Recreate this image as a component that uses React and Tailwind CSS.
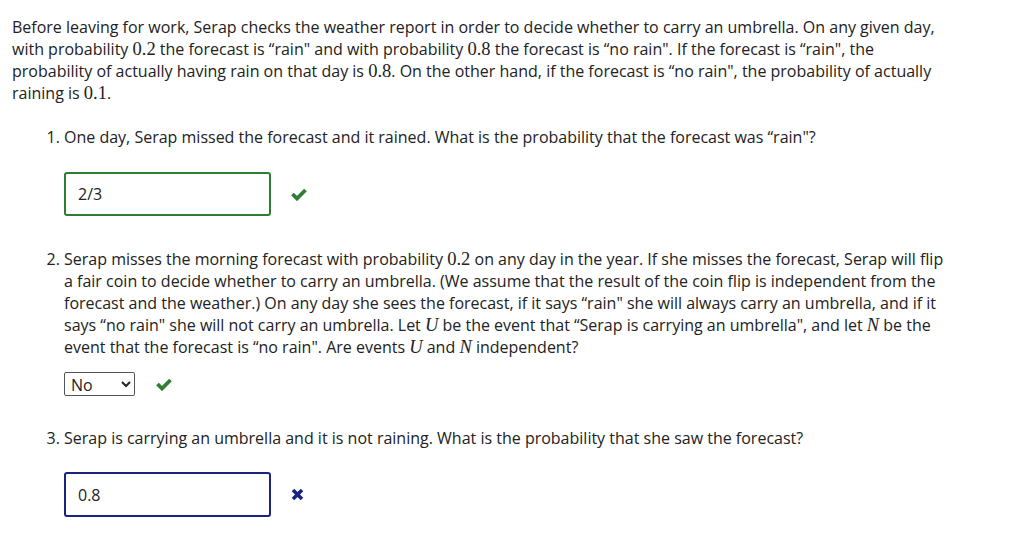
import { useState } from "react";

const M = ({ children, italic }) => (
  <span
    className={`font-['Liberation_Serif','DejaVu_Serif',serif] text-[18.5px] leading-none ${
      italic ? "italic" : ""
    }`}
  >
    {children}
  </span>
);

function Check() {
  return (
    <svg width="16" height="13" viewBox="0 0 16 13">
      <path d="M1.5 6 L6 10.5 L14.5 2" fill="none" stroke="#2e7d32" strokeWidth="3.8" />
    </svg>
  );
}

function Cross() {
  return (
    <svg width="13" height="13" viewBox="0 0 13 13">
      <path d="M2 2 L11 11 M11 2 L2 11" fill="none" stroke="#1a237e" strokeWidth="3.6" />
    </svg>
  );
}

export default function App() {
  const [sel, setSel] = useState("No");

  return (
    <div className="min-h-screen bg-white px-3 pt-[16px] text-[16px] leading-[22px] text-[#222] font-['Open_Sans',sans-serif]">
      <p className="pr-[60px]">
        Before leaving for work, Serap checks the weather report in order to decide whether to carry an
        umbrella. On any given day, with probability <M>0.2</M> the forecast is “rain" and with
        probability <M>0.8</M> the forecast is “no rain". If the forecast is “rain", the probability of
        actually having rain on that day is <M>0.8</M>. On the other hand, if the forecast is “no rain",
        the probability of actually raining is <M>0.1</M>.
      </p>

      <ol className="mt-[22px] pl-[52px] list-decimal">
        <li className="pr-[48px]">
          One day, Serap missed the forecast and it rained. What is the probability that the forecast was
          “rain"?
          <div className="flex items-center gap-5 mt-[24px]">
            <div className="w-[207px] h-[44px] border-2 border-[#2e7d32] rounded-[3px] flex items-center px-3">
              2/3
            </div>
            <Check />
          </div>
        </li>

        <li className="mt-[32px] pr-[48px]">
          Serap misses the morning forecast with probability <M>0.2</M> on any day in the year. If she
          misses the forecast, Serap will flip a fair coin to decide whether to carry an umbrella. (We
          assume that the result of the coin flip is independent from the forecast and the weather.) On
          any day she sees the forecast, if it says “rain" she will always carry an umbrella, and if it
          says “no rain" she will not carry an umbrella. Let <M italic>U</M> be the event that “Serap is
          carrying an umbrella", and let <M italic>N</M> be the event that the forecast is “no rain".
          Are events <M italic>U</M> and <M italic>N</M> independent?
          <div className="flex items-center gap-[21px] mt-[14px]">
            <select
              value={sel}
              onChange={(e) => setSel(e.target.value)}
              className="w-[71px] h-[24px] border border-[#555] rounded-[2px] pl-[2px] text-[16px] bg-white"
            >
              <option>No</option>
              <option>Yes</option>
            </select>
            <Check />
          </div>
        </li>

        <li className="mt-[31px] pr-[48px]">
          Serap is carrying an umbrella and it is not raining. What is the probability that she saw the
          forecast?
          <div className="flex items-center gap-5 mt-[23px]">
            <div className="w-[207px] h-[45px] border-2 border-[#1a237e] rounded-[3px] flex items-center px-3">
              0.8
            </div>
            <Cross />
          </div>
        </li>
      </ol>
    </div>
  );
}
